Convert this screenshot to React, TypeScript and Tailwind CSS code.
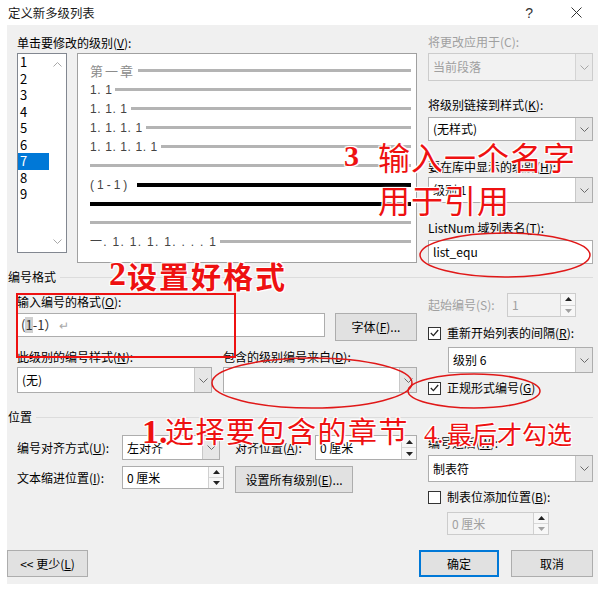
import React from "react";

const cx = (...a: (string | false | undefined)[]) => a.filter(Boolean).join(" ");

function Chevron({ color = "#707070", up = false }: { color?: string; up?: boolean }) {
  return (
    <svg width="9" height="5" viewBox="0 0 9 5" className="block">
      <polyline
        points={up ? "0.5,4.5 4.5,0.5 8.5,4.5" : "0.5,0.5 4.5,4.5 8.5,0.5"}
        fill="none"
        stroke={color}
        strokeWidth="1"
      />
    </svg>
  );
}

function Tri({ up, color }: { up: boolean; color: string }) {
  return (
    <svg width="7" height="4" viewBox="0 0 7 4" className="block">
      <polygon points={up ? "0,4 7,4 3.5,0" : "0,0 7,0 3.5,4"} fill={color} />
    </svg>
  );
}

function Select({ className, text, disabled }: { className: string; text: string; disabled?: boolean }) {
  return (
    <div
      className={cx(
        "flex border shrink-0",
        disabled ? "border-[#cccccc] bg-[#f2f2f2] text-[#a0a0a0]" : "border-[#adadad] bg-white text-black",
        className
      )}
    >
      <div className="flex-1 flex items-center pl-[4px] whitespace-nowrap overflow-hidden">{text}</div>
      <div
        className={cx(
          "w-[17px] flex items-center justify-center border-l",
          disabled ? "border-[#d4d4d4] bg-[#ebebeb]" : "border-[#c8c8c8] bg-[#e6e6e6]"
        )}
      >
        <Chevron color={disabled ? "#a6a6a6" : "#6a6a6a"} />
      </div>
    </div>
  );
}

function Spinner({
  className,
  text,
  disabled,
  downGray,
}: {
  className: string;
  text: string;
  disabled?: boolean;
  downGray?: boolean;
}) {
  return (
    <div
      className={cx(
        "flex border shrink-0",
        disabled ? "border-[#cccccc] bg-[#f2f2f2] text-[#a0a0a0]" : "border-[#adadad] bg-white text-black",
        className
      )}
    >
      <div className="flex-1 flex items-center pl-[4px] whitespace-nowrap">{text}</div>
      <div className="w-[15px] flex flex-col border-l border-[#d0d0d0] bg-[#f7f7f7]">
        <div className="flex-1 flex items-center justify-center border-b border-[#d8d8d8]">
          <Tri up color="#222222" />
        </div>
        <div className="flex-1 flex items-center justify-center">
          <Tri up={false} color={downGray ? "#a0a0a0" : "#222222"} />
        </div>
      </div>
    </div>
  );
}

function Check({ checked }: { checked?: boolean }) {
  return (
    <div className="w-[13px] h-[13px] shrink-0 border border-[#333333] bg-white flex items-center justify-center">
      {checked && (
        <svg width="9" height="8" viewBox="0 0 9 8" className="block">
          <polyline points="0.8,4 3.4,6.6 8.2,1" fill="none" stroke="#222222" strokeWidth="1.3" />
        </svg>
      )}
    </div>
  );
}

function Button({ className, children, primary }: { className: string; children: React.ReactNode; primary?: boolean }) {
  return (
    <div
      className={cx(
        "flex items-center justify-center shrink-0 bg-[#e1e1e1]",
        primary ? "border-2 border-[#0078d7]" : "border border-[#adadad]",
        className
      )}
    >
      {children}
    </div>
  );
}

function Header({ text }: { text: string }) {
  return (
    <div className="h-[16px] flex items-center pl-[1px] pr-[5px]">
      <span>{text}</span>
      <div className="flex-1 h-px bg-[#dcdcdc] ml-[4px]" />
    </div>
  );
}

const Gray = () => <div className="flex-1 h-[3px] bg-[#b4b4b4]" />;
const Black = () => <div className="flex-1 h-[4px] bg-black" />;

function PRow({ children }: { children?: React.ReactNode }) {
  return <div className="h-[19px] flex items-center">{children}</div>;
}

function Num({ t, wide }: { t: string; wide?: boolean }) {
  return (
    <span
      className={cx(
        "mr-[3px] text-[12px] leading-[14px] text-[#444444] font-['Liberation_Sans','Noto_Sans_CJK_SC',sans-serif] whitespace-pre",
        wide ? "tracking-[1.3px]" : "tracking-[0.6px]"
      )}
    >
      {t}
    </span>
  );
}

const shadow =
  "[text-shadow:1px_1px_0_#fff,-1px_-1px_0_#fff,1px_-1px_0_#fff,-1px_1px_0_#fff,0_0_3px_#fff]";

export default function App() {
  const levels = [1, 2, 3, 4, 5, 6, 7, 8, 9];
  return (
    <div className="relative w-[600px] h-[593px] bg-white overflow-hidden font-['Noto_Sans_CJK_SC',sans-serif] text-[12px] leading-[16px] text-black">
      {/* title bar */}
      <div className="h-[25px] flex items-center pl-[8px] pr-[18px]">
        <span className="text-[12.4px] text-[#1a1a1a]">定义新多级列表</span>
        <div className="flex-1" />
        <span className="text-[14px] text-[#333333] mr-[38px] font-['Liberation_Sans',sans-serif]">?</span>
        <svg width="11" height="11" viewBox="0 0 11 11" className="block">
          <path d="M0.5 0.5 L10.5 10.5 M10.5 0.5 L0.5 10.5" stroke="#333333" strokeWidth="1" />
        </svg>
      </div>

      {/* body */}
      <div className="ml-[7px] w-[591px] h-[559px] bg-[#f0f0f0] flex flex-col">
        {/* section 1 */}
        <div className="h-[244px] flex pl-[10px] pt-[9px]">
          <div className="w-[400px] flex flex-col">
            <div className="mt-[1px] h-[16px]">
              单击要修改的级别(<u>V</u>):
            </div>
            <div className="mt-[2px] flex items-start">
              <div className="w-[50px] h-[200px] border border-[#828790] bg-white flex">
                <div className="w-[31px] flex flex-col">
                  {levels.map((n) => (
                    <div
                      key={n}
                      className={cx(
                        "h-[16.5px] leading-[16.5px] pl-[2px] text-[13px]",
                        n === 7 ? "bg-[#0078d7] text-white" : "text-black"
                      )}
                    >
                      {n}
                    </div>
                  ))}
                </div>
                <div className="flex-1 flex flex-col justify-between items-center pt-[8px] pb-[8px]">
                  <Chevron up color="#a8a8a8" />
                  <Chevron color="#a8a8a8" />
                </div>
              </div>
              <div className="ml-[10px] w-[340px] h-[210px] border border-[#a0a0a0] bg-white flex flex-col pt-[7px] pl-[12px] pr-[5px]">
                <PRow>
                  <span className="mr-[3px] text-[13px] leading-[14px] tracking-[2px] text-[#8c8c8c]">第一章</span>
                  <Gray />
                </PRow>
                <PRow>
                  <Num t="1. 1" />
                  <Gray />
                </PRow>
                <PRow>
                  <Num t="1. 1. 1" />
                  <Gray />
                </PRow>
                <PRow>
                  <Num t="1. 1. 1. 1" />
                  <Gray />
                </PRow>
                <PRow>
                  <Num t="1. 1. 1. 1. 1" />
                  <Gray />
                </PRow>
                <PRow>
                  <Gray />
                </PRow>
                <PRow>
                  <span className="mr-[7px] text-[12px] leading-[14px] tracking-[3px] text-[#444444] font-['Liberation_Sans',sans-serif]">
                    (1-1)
                  </span>
                  <Black />
                </PRow>
                <PRow>
                  <Black />
                </PRow>
                <PRow>
                  <Gray />
                </PRow>
                <PRow>
                  <Num t="一. 1. 1. 1. 1. . . . 1" wide />
                  <Gray />
                </PRow>
              </div>
            </div>
          </div>
          <div className="w-[165px] ml-[11px] flex flex-col">
            <div className="h-[16px] text-[#a0a0a0]">将更改应用于(C):</div>
            <Select className="mt-[3px] w-[165px] h-[28px]" text="当前段落" disabled />
            <div className="mt-[16px] h-[16px]">
              将级别链接到样式(<u>K</u>):
            </div>
            <Select className="mt-[4px] w-[165px] h-[24px]" text="(无样式)" />
            <div className="mt-[18px] h-[16px]">
              要在库中显示的级别(<u>H</u>):
            </div>
            <Select className="mt-[2px] w-[165px] h-[26px]" text="级别 1" />
            <div className="mt-[17px] h-[16px]">
              ListNum 域列表名(<u>T</u>):
            </div>
            <div className="mt-[4px] w-[165px] h-[24px] border border-[#adadad] bg-white flex items-center pl-[4px]">
              list_equ
            </div>
          </div>
        </div>

        <Header text="编号格式" />

        {/* section 2 */}
        <div className="h-[124px] flex pl-[10px]">
          <div className="w-[400px] flex flex-col">
            <div className="mt-[9px] h-[16px]">
              输入编号的格式(<u>O</u>):
            </div>
            <div className="mt-[3px] flex items-start">
              <div className="w-[308px] h-[24px] border border-[#adadad] bg-white flex items-center pl-[3px] text-[13px] text-[#333333]">
                <span>(</span>
                <span className="bg-[#d0d0d0]">1</span>
                <span>-1）</span>
                <span className="ml-[2px] text-[#a8a8a8] text-[12px]">↵</span>
              </div>
              <Button className="ml-[10px] w-[82px] h-[28px]">
                字体(<u>F</u>)...
              </Button>
            </div>
            <div className="mt-[8px] h-[16px] flex">
              <div className="w-[206px]">
                此级别的编号样式(<u>N</u>):
              </div>
              <div>
                包含的级别编号来自(<u>D</u>):
              </div>
            </div>
            <div className="mt-[2px] flex">
              <Select className="w-[195px] h-[26px]" text="(无)" />
              <Select className="ml-[11px] w-[194px] h-[26px]" text="" />
            </div>
          </div>
          <div className="w-[165px] ml-[11px] flex flex-col">
            <div className="mt-[8px] h-[24px] flex items-center">
              <div className="w-[79px] text-[#a0a0a0]">起始编号(S):</div>
              <Spinner className="w-[69px] h-[24px]" text="1" disabled downGray />
            </div>
            <div className="mt-[8px] h-[16px] flex items-center">
              <Check checked />
              <span className="ml-[6px]">
                重新开始列表的间隔(<u>R</u>):
              </span>
            </div>
            <Select className="mt-[6px] ml-[20px] w-[145px] h-[26px]" text="级别 6" />
            <div className="mt-[7px] h-[16px] flex items-center">
              <Check checked />
              <span className="ml-[6px]">
                正规形式编号(<u>G</u>)
              </span>
            </div>
          </div>
        </div>

        <Header text="位置" />

        {/* section 3 */}
        <div className="h-[120px] flex pl-[10px]">
          <div className="w-[400px] flex flex-col">
            <div className="mt-[10px] flex items-center">
              <div className="w-[105px]">
                编号对齐方式(<u>U</u>):
              </div>
              <Select className="w-[98px] h-[25px]" text="左对齐" />
              <div className="ml-[15px] w-[80px]">
                对齐位置(<u>A</u>):
              </div>
              <Spinner className="w-[102px] h-[25px]" text="0 厘米" />
            </div>
            <div className="mt-[6px] flex items-start">
              <div className="w-[105px] h-[23px] flex items-center">
                文本缩进位置(<u>I</u>):
              </div>
              <Spinner className="w-[102px] h-[23px]" text="0 厘米" />
              <Button className="ml-[11px] w-[118px] h-[27px]">
                设置所有级别(<u>E</u>)...
              </Button>
            </div>
          </div>
          <div className="w-[165px] ml-[11px] flex flex-col">
            <div className="mt-[10px] h-[16px]">
              编号之后(<u>W</u>):
            </div>
            <Select className="mt-[4px] w-[165px] h-[27px]" text="制表符" />
            <div className="mt-[7px] h-[16px] flex items-center">
              <Check />
              <span className="ml-[6px]">
                制表位添加位置(<u>B</u>):
              </span>
            </div>
            <Spinner className="mt-[7px] ml-[19px] w-[102px] h-[23px]" text="0 厘米" disabled downGray />
          </div>
        </div>

        {/* bottom buttons */}
        <div className="mt-[5px] flex pr-[5px]">
          <Button className="w-[81px] h-[27px]">
            &lt;&lt; 更少(<u>L</u>)
          </Button>
          <div className="flex-1" />
          <Button className="w-[80px] h-[27px]" primary>
            确定
          </Button>
          <Button className="ml-[12px] w-[82px] h-[27px]">取消</Button>
        </div>
      </div>

      {/* annotations overlay */}
      <div className="absolute left-[16px] top-[293px] w-[220px] h-[65px] border-2 border-[#ee1111] pointer-events-none" />
      <svg className="absolute left-0 top-0 pointer-events-none" width="600" height="593" viewBox="0 0 600 593">
        <ellipse cx="505" cy="255" rx="85" ry="22" fill="none" stroke="#e01818" strokeWidth="1.5" />
        <ellipse cx="312" cy="383" rx="100" ry="25" fill="none" stroke="#e01818" strokeWidth="1.5" />
        <ellipse cx="474" cy="391" rx="66" ry="17" fill="none" stroke="#e01818" strokeWidth="1.5" />
      </svg>

      <div className={cx("absolute left-[344px] top-[141px] text-[30px] leading-none font-bold text-[#ee1111] font-['Liberation_Serif',serif]", shadow)}>
        3
      </div>
      <div className={cx("absolute left-[378px] top-[140px] text-[32px] leading-none tracking-[1px] text-[#ee1111] whitespace-nowrap", shadow)}>
        输入一个名字
      </div>
      <div className={cx("absolute left-[378px] top-[183px] text-[32px] leading-none tracking-[1px] text-[#ee1111] whitespace-nowrap", shadow)}>
        用于引用
      </div>

      <div className={cx("absolute left-[109px] top-[257px] text-[34px] leading-none font-bold text-[#ee1111] font-['Liberation_Serif',serif]", shadow)}>
        2
      </div>
      <div className={cx("absolute left-[127px] top-[260px] text-[30px] leading-none font-bold tracking-[2px] text-[#ee1111] whitespace-nowrap", shadow)}>
        设置好格式
      </div>

      <div className={cx("absolute left-[142px] top-[415px] text-[34px] leading-none font-bold text-[#ee1111] font-['Liberation_Serif',serif]", shadow)}>
        1.
      </div>
      <div className={cx("absolute left-[165px] top-[416px] text-[29px] leading-none tracking-[1.5px] text-[#ee1111] whitespace-nowrap", shadow)}>
        选择要包含的章节
      </div>
      <div className={cx("absolute left-[424px] top-[422px] text-[26px] leading-none text-[#ee1111] font-['Liberation_Serif',serif]", shadow)}>
        4.
      </div>
      <div className={cx("absolute left-[447px] top-[421px] text-[25px] leading-none text-[#ee1111] whitespace-nowrap", shadow)}>
        最后才勾选
      </div>
    </div>
  );
}
